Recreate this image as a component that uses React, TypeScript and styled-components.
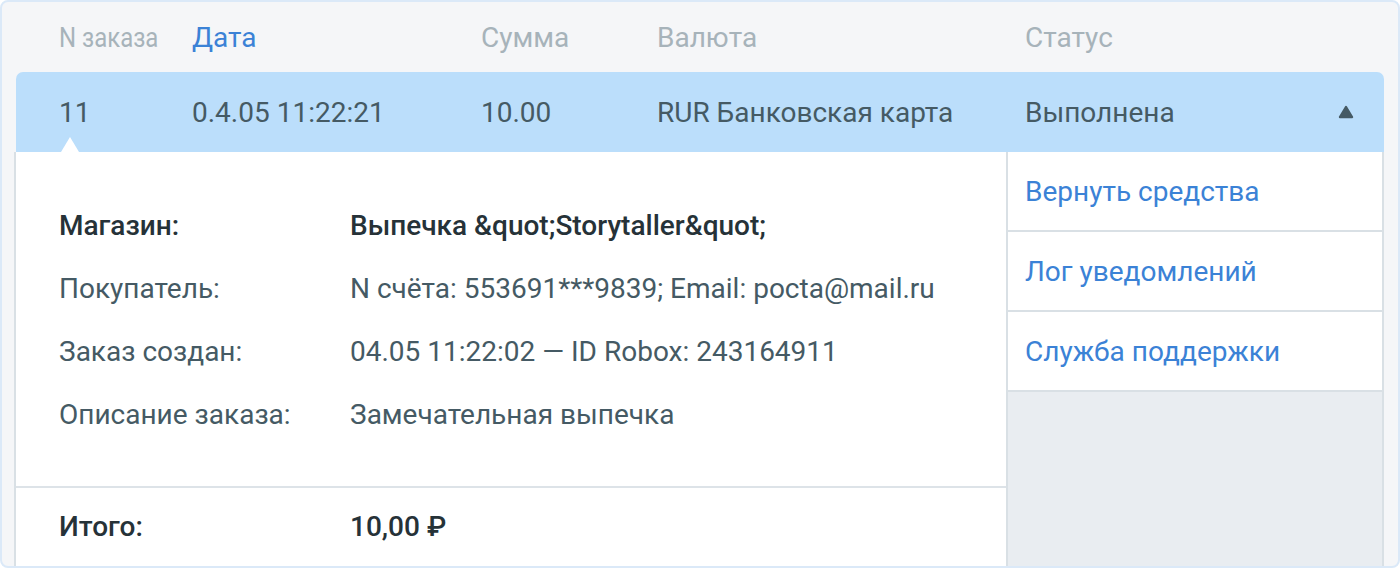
import React from "react";
import styled, { createGlobalStyle } from "styled-components";

const GlobalStyle = createGlobalStyle`
	html, body {
		margin: 0;
		padding: 0;
		background: #ffffff;
	}
	body {
		font-family: Roboto, "Noto Sans", sans-serif;
	}
`;

const Frame = styled.div`
	box-sizing: border-box;
	width: 1400px;
	height: 568px;
	border: 2px solid #dbe9f8;
	border-radius: 8px;
	background: #f5f6f8;
	overflow: hidden;
`;

const Columns = styled.div`
	display: grid;
	grid-template-columns: 133px 289px 176px 368px 1fr;
	align-items: center;
	padding-left: 43px;
`;

const HeadRow = styled(Columns)`
	height: 70px;
	margin: 0 14px;
`;

const HeadCell = styled.div<{ $active?: boolean; $narrow?: boolean }>`
	font-size: 28px;
	white-space: nowrap;
	color: ${(p) => (p.$active ? "#3b82d6" : "#a7b3ba")};
	transform-origin: left center;
	transform: ${(p) => (p.$narrow ? "scaleX(0.855)" : "none")};
`;

const OrderRow = styled(Columns)`
	position: relative;
	height: 80px;
	margin: 0 14px;
	background: #bbdefb;
	border-radius: 7px 7px 0 0;
	color: #455a64;
	font-size: 28px;
	padding-right: 30px;
`;

const Pointer = styled.span`
	position: absolute;
	left: 45px;
	bottom: 0;
	width: 0;
	height: 0;
	border-left: 9px solid transparent;
	border-right: 9px solid transparent;
	border-bottom: 15px solid #ffffff;
`;

const StatusCell = styled.div`
	display: flex;
	align-items: center;
	justify-content: space-between;
`;

const SortIcon = () => (
	<svg width="16" height="14" viewBox="0 0 16 14">
		<path
			d="M8 2 L14 12 L2 12 Z"
			fill="#455a64"
			stroke="#455a64"
			strokeWidth="2.4"
			strokeLinejoin="round"
		/>
	</svg>
);

const Details = styled.div`
	display: flex;
	margin: 0 14px 0 12px;
	border-left: 2px solid #d9e0e5;
	border-right: 2px solid #d9e0e5;
	background: #ffffff;
	height: 420px;
`;

const Info = styled.div`
	flex: 0 0 990px;
	display: flex;
	flex-direction: column;
	border-right: 2px solid #d9e0e5;
`;

const InfoList = styled.div`
	padding: 42px 0 40px 43px;
	border-bottom: 2px solid #dde3e8;
`;

const InfoRow = styled.div<{ $strong?: boolean }>`
	display: grid;
	grid-template-columns: 291px 1fr;
	height: 63px;
	align-items: center;
	font-size: 28px;
	color: ${(p) => (p.$strong ? "#263238" : "#455a64")};
	font-weight: ${(p) => (p.$strong ? 500 : 400)};
`;

const Total = styled(InfoRow)`
	height: 76px;
	padding-left: 43px;
`;

const Side = styled.div`
	flex: 1;
	display: flex;
	flex-direction: column;
	background: #e9edf1;
`;

const SideLink = styled.a`
	display: flex;
	align-items: center;
	height: 78px;
	padding-left: 17px;
	background: #ffffff;
	border-bottom: 2px solid #d9e0e5;
	color: #3b82d6;
	font-size: 28px;
	text-decoration: none;
	cursor: pointer;
`;

const info = [
	{ label: "Магазин:", value: "Выпечка &quot;Storytaller&quot;", strong: true },
	{ label: "Покупатель:", value: "N счёта: 553691***9839; Email: pocta@mail.ru" },
	{ label: "Заказ создан:", value: "04.05 11:22:02 — ID Robox: 243164911" },
	{ label: "Описание заказа:", value: "Замечательная выпечка" },
];

const links = ["Вернуть средства", "Лог уведомлений", "Служба поддержки"];

export default function App() {
	return (
		<>
			<GlobalStyle />
			<Frame>
				<HeadRow>
					<HeadCell $narrow>N заказа</HeadCell>
					<HeadCell $active>Дата</HeadCell>
					<HeadCell>Сумма</HeadCell>
					<HeadCell>Валюта</HeadCell>
					<HeadCell>Статус</HeadCell>
				</HeadRow>
				<OrderRow>
					<div>11</div>
					<div>0.4.05 11:22:21</div>
					<div>10.00</div>
					<div>RUR Банковская карта</div>
					<StatusCell>
						Выполнена
						<SortIcon />
					</StatusCell>
					<Pointer />
				</OrderRow>
				<Details>
					<Info>
						<InfoList>
							{info.map((r) => (
								<InfoRow key={r.label} $strong={r.strong}>
									<span>{r.label}</span>
									<span>{r.value}</span>
								</InfoRow>
							))}
						</InfoList>
						<Total $strong>
							<span>Итого:</span>
							<span>10,00 ₽</span>
						</Total>
					</Info>
					<Side>
						{links.map((l) => (
							<SideLink key={l}>{l}</SideLink>
						))}
					</Side>
				</Details>
			</Frame>
		</>
	);
}
